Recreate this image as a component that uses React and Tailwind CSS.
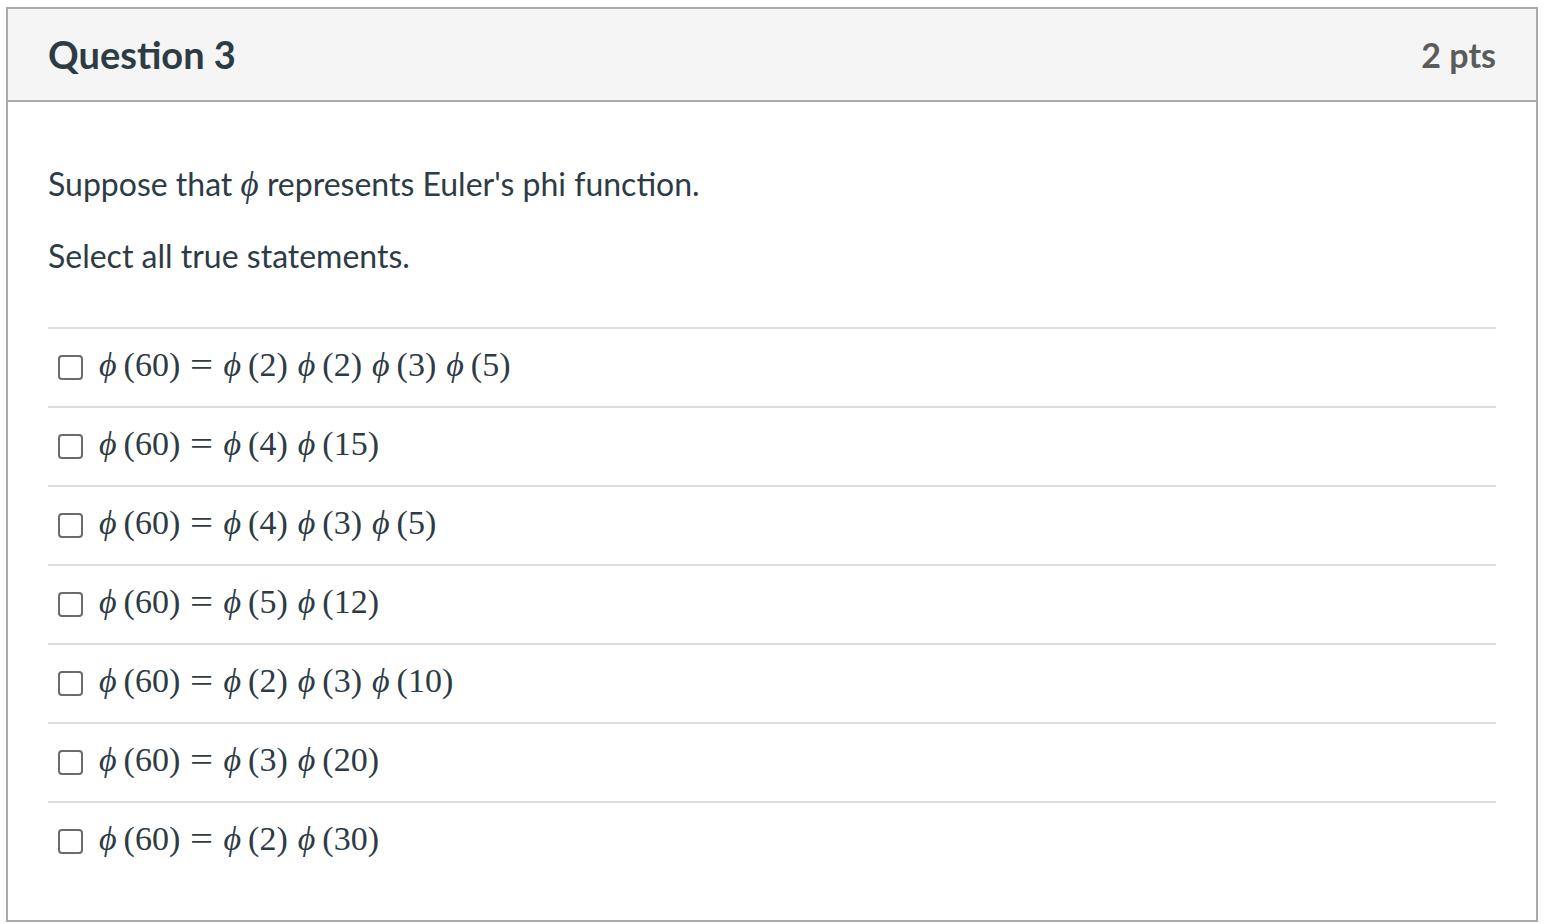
import React from "react";

const rows = [
  ["2", "2", "3", "5"],
  ["4", "15"],
  ["4", "3", "5"],
  ["5", "12"],
  ["2", "3", "10"],
  ["3", "20"],
  ["2", "30"],
];

const Phi = ({ n }) => (
  <span className="inline-flex items-baseline">
    <span className="italic">ϕ</span>
    <span className="ml-[7px]">({n})</span>
  </span>
);

const Equation = ({ parts }) => (
  <span
    className="inline-flex items-baseline text-[34px] text-[#2d3b45] leading-none"
    style={{ fontFamily: '"Liberation Serif", "DejaVu Serif", serif' }}
  >
    <Phi n="60" />
    <span className="mx-[12px] inline-block scale-x-[1.2]">=</span>
    <span className="inline-flex items-baseline gap-[10px]">
      {parts.map((p, i) => (
        <Phi key={i} n={p} />
      ))}
    </span>
  </span>
);

export default function App() {
  return (
    <div
      className="min-h-screen bg-white pt-[7px] pl-[6px]"
      style={{ fontFamily: "Lato, 'Liberation Sans', sans-serif" }}
    >
      <div className="w-[1532px] border-2 border-[#aaaaaa] bg-white">
        {/* header */}
        <div className="h-[93px] flex items-center justify-between px-[40px] bg-[#f5f5f5] border-b-2 border-[#aaaaaa]">
          <h2 className="text-[38px] font-bold text-[#2d3b45]">Question 3</h2>
          <span className="text-[34px] font-bold text-[#5b5b5b]">2 pts</span>
        </div>

        {/* body */}
        <div className="px-[40px] pt-[58px] pb-[40px] text-[#2d3b45]">
          <p className="text-[32px] leading-[48px]">
            Suppose that{" "}
            <span
              className="italic text-[35px]"
              style={{ fontFamily: '"Liberation Serif", "DejaVu Serif", serif' }}
            >
              ϕ
            </span>{" "}
            represents Euler's phi function.
          </p>
          <p className="text-[32px] leading-[48px] mt-[23px]">Select all true statements.</p>

          <div className="mt-[47px]">
            {rows.map((parts, i) => (
              <div
                key={i}
                className="h-[79px] flex items-center border-t-2 border-[#dddddd] pl-[10px]"
              >
                <span className="w-[25px] h-[25px] rounded-[4px] border-2 border-[#6b6b6b] bg-white shrink-0" />
                <span className="ml-[16px] mb-[6px]">
                  <Equation parts={parts} />
                </span>
              </div>
            ))}
          </div>
        </div>
      </div>
    </div>
  );
}
